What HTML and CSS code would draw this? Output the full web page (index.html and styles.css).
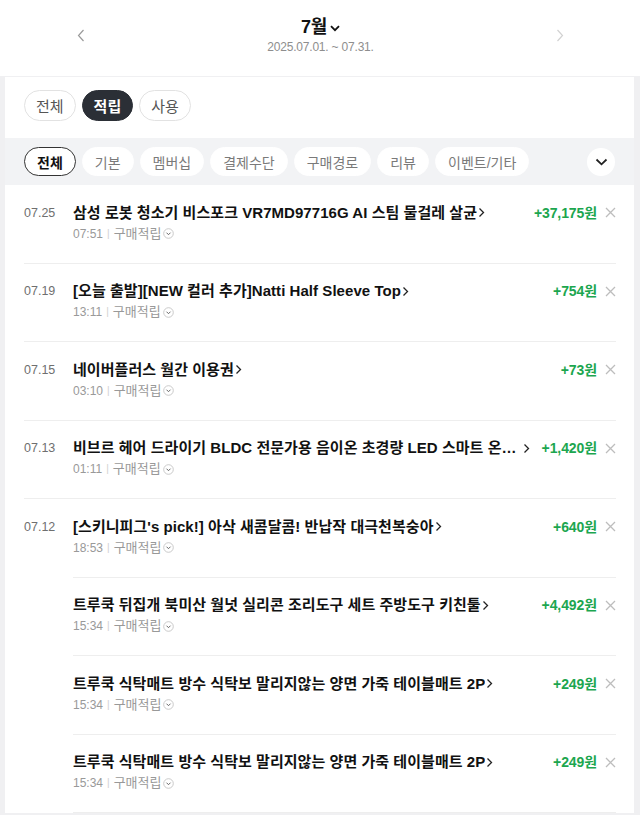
FILE: index.html
```html
<!DOCTYPE html>
<html lang="ko">
<head>
<meta charset="utf-8">
<title>포인트 내역</title>
<link rel="stylesheet" href="styles.css">
</head>
<body>
<header class="header">
  <button class="nav-arrow prev" aria-label="이전 달">
    <svg width="8" height="13" viewBox="0 0 8 13"><path d="M6.5 1 L1.5 6.5 L6.5 12" fill="none" stroke="#9a9a9a" stroke-width="1.2"/></svg>
  </button>
  <div class="month">
    <div class="month-title">7월
      <svg class="month-caret" width="10" height="7" viewBox="0 0 10 7"><path d="M1 1.2 L5 5.2 L9 1.2" fill="none" stroke="#111" stroke-width="1.8"/></svg>
    </div>
    <div class="month-range">2025.07.01. ~ 07.31.</div>
  </div>
  <button class="nav-arrow next" aria-label="다음 달">
    <svg width="8" height="13" viewBox="0 0 8 13"><path d="M1.5 1 L6.5 6.5 L1.5 12" fill="none" stroke="#d2d2d2" stroke-width="1.2"/></svg>
  </button>
</header>

<main class="panel">
  <div class="tabs">
    <span class="tab">전체</span>
    <span class="tab active">적립</span>
    <span class="tab">사용</span>
  </div>

  <div class="filters">
    <div class="chips">
      <span class="chip selected">전체</span>
      <span class="chip">기본</span>
      <span class="chip">멤버십</span>
      <span class="chip">결제수단</span>
      <span class="chip">구매경로</span>
      <span class="chip">리뷰</span>
      <span class="chip">이벤트/기타</span>
    </div>
    <button class="more" aria-label="더보기">
      <svg width="13" height="8" viewBox="0 0 13 8"><path d="M1.5 1.5 L6.5 6.3 L11.5 1.5" fill="none" stroke="#222" stroke-width="1.8"/></svg>
    </button>
  </div>

  <section class="list">
    <div class="group">
      <div class="date">07.25</div>
      <div class="items">
        <div class="item">
          <div class="item-main">
            <div class="title"><span class="t-text">삼성 로봇 청소기 비스포크 VR7MD97716G AI 스팀 물걸레 살균</span><svg class="t-chev" width="7" height="11" viewBox="0 0 7 11"><path d="M1.5 1.5 L5.5 5.5 L1.5 9.5" fill="none" stroke="#222" stroke-width="1.3"/></svg></div>
            <span class="amount">+37,175원</span>
            <svg class="close" width="11" height="11" viewBox="0 0 11 11"><path d="M1 1 L10 10 M10 1 L1 10" stroke="#bdbdbd" stroke-width="1.3"/></svg>
          </div>
          <div class="sub"><span>07:51</span><span class="bar">|</span><span class="kind">구매적립</span><svg class="sub-ico" width="11" height="11" viewBox="0 0 11 11"><circle cx="5.5" cy="5.5" r="4.8" fill="none" stroke="#c4c4c4" stroke-width="0.9"/><path d="M3.5 4.7 L5.5 6.7 L7.5 4.7" fill="none" stroke="#666" stroke-width="1"/></svg></div>
        </div>
      </div>
    </div>

    <div class="group">
      <div class="date">07.19</div>
      <div class="items">
        <div class="item">
          <div class="item-main">
            <div class="title"><span class="t-text">[오늘 출발][NEW 컬러 추가]Natti Half Sleeve Top</span><svg class="t-chev" width="7" height="11" viewBox="0 0 7 11"><path d="M1.5 1.5 L5.5 5.5 L1.5 9.5" fill="none" stroke="#222" stroke-width="1.3"/></svg></div>
            <span class="amount">+754원</span>
            <svg class="close" width="11" height="11" viewBox="0 0 11 11"><path d="M1 1 L10 10 M10 1 L1 10" stroke="#bdbdbd" stroke-width="1.3"/></svg>
          </div>
          <div class="sub"><span>13:11</span><span class="bar">|</span><span class="kind">구매적립</span><svg class="sub-ico" width="11" height="11" viewBox="0 0 11 11"><circle cx="5.5" cy="5.5" r="4.8" fill="none" stroke="#c4c4c4" stroke-width="0.9"/><path d="M3.5 4.7 L5.5 6.7 L7.5 4.7" fill="none" stroke="#666" stroke-width="1"/></svg></div>
        </div>
      </div>
    </div>

    <div class="group">
      <div class="date">07.15</div>
      <div class="items">
        <div class="item">
          <div class="item-main">
            <div class="title"><span class="t-text">네이버플러스 월간 이용권</span><svg class="t-chev" width="7" height="11" viewBox="0 0 7 11"><path d="M1.5 1.5 L5.5 5.5 L1.5 9.5" fill="none" stroke="#222" stroke-width="1.3"/></svg></div>
            <span class="amount">+73원</span>
            <svg class="close" width="11" height="11" viewBox="0 0 11 11"><path d="M1 1 L10 10 M10 1 L1 10" stroke="#bdbdbd" stroke-width="1.3"/></svg>
          </div>
          <div class="sub"><span>03:10</span><span class="bar">|</span><span class="kind">구매적립</span><svg class="sub-ico" width="11" height="11" viewBox="0 0 11 11"><circle cx="5.5" cy="5.5" r="4.8" fill="none" stroke="#c4c4c4" stroke-width="0.9"/><path d="M3.5 4.7 L5.5 6.7 L7.5 4.7" fill="none" stroke="#666" stroke-width="1"/></svg></div>
        </div>
      </div>
    </div>

    <div class="group">
      <div class="date">07.13</div>
      <div class="items">
        <div class="item">
          <div class="item-main">
            <div class="title"><span class="t-text">비브르 헤어 드라이기 BLDC 전문가용 음이온 초경량 LED 스마트 온도조절</span><svg class="t-chev gap" width="7" height="11" viewBox="0 0 7 11"><path d="M1.5 1.5 L5.5 5.5 L1.5 9.5" fill="none" stroke="#222" stroke-width="1.3"/></svg></div>
            <span class="amount">+1,420원</span>
            <svg class="close" width="11" height="11" viewBox="0 0 11 11"><path d="M1 1 L10 10 M10 1 L1 10" stroke="#bdbdbd" stroke-width="1.3"/></svg>
          </div>
          <div class="sub"><span>01:11</span><span class="bar">|</span><span class="kind">구매적립</span><svg class="sub-ico" width="11" height="11" viewBox="0 0 11 11"><circle cx="5.5" cy="5.5" r="4.8" fill="none" stroke="#c4c4c4" stroke-width="0.9"/><path d="M3.5 4.7 L5.5 6.7 L7.5 4.7" fill="none" stroke="#666" stroke-width="1"/></svg></div>
        </div>
      </div>
    </div>

    <div class="group open">
      <div class="date">07.12</div>
      <div class="items">
        <div class="item">
          <div class="item-main">
            <div class="title"><span class="t-text">[스키니피그's pick!] 아삭 새콤달콤! 반납작 대극천복숭아</span><svg class="t-chev" width="7" height="11" viewBox="0 0 7 11"><path d="M1.5 1.5 L5.5 5.5 L1.5 9.5" fill="none" stroke="#222" stroke-width="1.3"/></svg></div>
            <span class="amount">+640원</span>
            <svg class="close" width="11" height="11" viewBox="0 0 11 11"><path d="M1 1 L10 10 M10 1 L1 10" stroke="#bdbdbd" stroke-width="1.3"/></svg>
          </div>
          <div class="sub"><span>18:53</span><span class="bar">|</span><span class="kind">구매적립</span><svg class="sub-ico" width="11" height="11" viewBox="0 0 11 11"><circle cx="5.5" cy="5.5" r="4.8" fill="none" stroke="#c4c4c4" stroke-width="0.9"/><path d="M3.5 4.7 L5.5 6.7 L7.5 4.7" fill="none" stroke="#666" stroke-width="1"/></svg></div>
        </div>
        <div class="item">
          <div class="item-main">
            <div class="title"><span class="t-text">트루쿡 뒤집개 북미산 월넛 실리콘 조리도구 세트 주방도구 키친툴</span><svg class="t-chev" width="7" height="11" viewBox="0 0 7 11"><path d="M1.5 1.5 L5.5 5.5 L1.5 9.5" fill="none" stroke="#222" stroke-width="1.3"/></svg></div>
            <span class="amount">+4,492원</span>
            <svg class="close" width="11" height="11" viewBox="0 0 11 11"><path d="M1 1 L10 10 M10 1 L1 10" stroke="#bdbdbd" stroke-width="1.3"/></svg>
          </div>
          <div class="sub"><span>15:34</span><span class="bar">|</span><span class="kind">구매적립</span><svg class="sub-ico" width="11" height="11" viewBox="0 0 11 11"><circle cx="5.5" cy="5.5" r="4.8" fill="none" stroke="#c4c4c4" stroke-width="0.9"/><path d="M3.5 4.7 L5.5 6.7 L7.5 4.7" fill="none" stroke="#666" stroke-width="1"/></svg></div>
        </div>
        <div class="item">
          <div class="item-main">
            <div class="title"><span class="t-text">트루쿡 식탁매트 방수 식탁보 말리지않는 양면 가죽 테이블매트 2P</span><svg class="t-chev" width="7" height="11" viewBox="0 0 7 11"><path d="M1.5 1.5 L5.5 5.5 L1.5 9.5" fill="none" stroke="#222" stroke-width="1.3"/></svg></div>
            <span class="amount">+249원</span>
            <svg class="close" width="11" height="11" viewBox="0 0 11 11"><path d="M1 1 L10 10 M10 1 L1 10" stroke="#bdbdbd" stroke-width="1.3"/></svg>
          </div>
          <div class="sub"><span>15:34</span><span class="bar">|</span><span class="kind">구매적립</span><svg class="sub-ico" width="11" height="11" viewBox="0 0 11 11"><circle cx="5.5" cy="5.5" r="4.8" fill="none" stroke="#c4c4c4" stroke-width="0.9"/><path d="M3.5 4.7 L5.5 6.7 L7.5 4.7" fill="none" stroke="#666" stroke-width="1"/></svg></div>
        </div>
        <div class="item">
          <div class="item-main">
            <div class="title"><span class="t-text">트루쿡 식탁매트 방수 식탁보 말리지않는 양면 가죽 테이블매트 2P</span><svg class="t-chev" width="7" height="11" viewBox="0 0 7 11"><path d="M1.5 1.5 L5.5 5.5 L1.5 9.5" fill="none" stroke="#222" stroke-width="1.3"/></svg></div>
            <span class="amount">+249원</span>
            <svg class="close" width="11" height="11" viewBox="0 0 11 11"><path d="M1 1 L10 10 M10 1 L1 10" stroke="#bdbdbd" stroke-width="1.3"/></svg>
          </div>
          <div class="sub"><span>15:34</span><span class="bar">|</span><span class="kind">구매적립</span><svg class="sub-ico" width="11" height="11" viewBox="0 0 11 11"><circle cx="5.5" cy="5.5" r="4.8" fill="none" stroke="#c4c4c4" stroke-width="0.9"/><path d="M3.5 4.7 L5.5 6.7 L7.5 4.7" fill="none" stroke="#666" stroke-width="1"/></svg></div>
        </div>
      </div>
    </div>
  </section>
</main>
</body>
</html>
```

FILE: styles.css
```css
* {
  box-sizing: border-box;
}

html,
body {
  margin: 0;
  padding: 0;
  height: 100%;
  overflow: hidden;
}

body {
  background: #f0f0f2;
  font-family: "Liberation Sans", "Noto Sans CJK KR", sans-serif;
  color: #111;
}

button {
  border: 0;
  background: none;
  padding: 0;
  margin: 0;
  font: inherit;
  cursor: pointer;
}

/* Header */
.header {
  height: 76px;
  background: #fff;
  display: flex;
  justify-content: space-between;
  align-items: flex-start;
  padding: 0 75px 0 76px;
}

.nav-arrow {
  width: 10px;
  height: 13px;
  margin-top: 29px;
  display: flex;
  align-items: center;
  justify-content: center;
}

.month {
  display: flex;
  flex-direction: column;
  align-items: center;
  padding-top: 15px;
}

.month-title {
  display: flex;
  align-items: center;
  font-size: 18px;
  line-height: 24px;
  font-weight: 700;
  color: #111;
  letter-spacing: -0.3px;
}

.month-caret {
  margin-left: 3px;
  margin-top: 2px;
}

.month-range {
  margin-top: 0;
  font-size: 12px;
  line-height: 17px;
  color: #8e8e8e;
  letter-spacing: -0.2px;
}

/* Panel */
.panel {
  margin: 1px 6px 0 5px;
  background: #fff;
}

.tabs {
  display: flex;
  gap: 6px;
  padding: 13px 19px 17px;
}

.tab {
  height: 31px;
  padding: 0 11px;
  border: 1px solid #e2e2e2;
  border-radius: 16px;
  display: flex;
  align-items: center;
  font-size: 15px;
  color: #555;
  background: #fff;
}

.tab.active {
  background: #2b2f36;
  border-color: #2b2f36;
  color: #fff;
  font-weight: 700;
}

.filters {
  background: #f2f3f5;
  display: flex;
  align-items: center;
  padding: 9px 19px 9px 19px;
  height: 47px;
}

.chips {
  display: flex;
  gap: 6px;
  flex: 1;
  min-width: 0;
  overflow: hidden;
}

.chip {
  flex: none;
  height: 29px;
  padding: 0 12px;
  border: 1px solid #fff;
  border-radius: 15px;
  background: #fff;
  display: flex;
  align-items: center;
  font-size: 14px;
  color: #7a7a7a;
}

.chip.selected {
  border: 1.5px solid #333;
  color: #111;
  font-weight: 700;
}

.more {
  flex: none;
  width: 28px;
  height: 28px;
  border-radius: 50%;
  background: #fff;
  display: flex;
  align-items: center;
  justify-content: center;
  margin-left: 12px;
}

/* List */
.list {
  padding: 0 18px 0 19px;
}

.group {
  display: flex;
  border-bottom: 1px solid #eeeeee;
}

.group.open {
  border-bottom: 0;
}

.date {
  flex: none;
  width: 49px;
  padding-top: 17.5px;
  font-size: 12.5px;
  line-height: 20px;
  color: #6f6f6f;
}

.items {
  flex: 1;
  min-width: 0;
}

.item {
  padding: 17.5px 0 20px;
  border-bottom: 1px solid #eeeeee;
}

.item:last-child {
  border-bottom: 0;
}

.group.open .item:last-child {
  border-bottom: 1px solid #eeeeee;
}

.item-main {
  display: flex;
  align-items: center;
  height: 20px;
}

.title {
  flex: 1;
  min-width: 0;
  display: flex;
  align-items: center;
}

.t-text {
  min-width: 0;
  overflow: hidden;
  white-space: nowrap;
  text-overflow: ellipsis;
  font-size: 15px;
  line-height: 20px;
  font-weight: 700;
  color: #111;
  letter-spacing: 0.05px;
}

.t-chev {
  flex: none;
  margin-left: 1px;
}

.t-chev.gap {
  margin-left: 5px;
}

.amount {
  flex: none;
  margin-left: 12px;
  font-size: 14px;
  line-height: 20px;
  font-weight: 700;
  color: #1ca64f;
  letter-spacing: -0.1px;
}

.close {
  flex: none;
  margin-left: 8px;
}

.sub {
  margin-top: 2px;
  height: 18px;
  display: flex;
  align-items: center;
  font-size: 12px;
  line-height: 18px;
  color: #999;
}

.kind {
  font-size: 13px;
}

.bar {
  margin: 0 4px;
  font-size: 10px;
  color: #d0d0d0;
}

.sub-ico {
  margin-left: 2px;
}
```
